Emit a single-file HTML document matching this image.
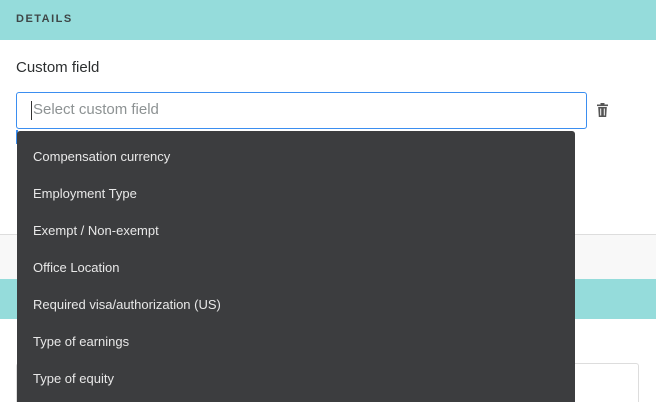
<!DOCTYPE html>
<html><head><style>
html,body{margin:0;width:656px;height:402px;overflow:hidden}
body{background:#fff;font-family:"Liberation Sans",sans-serif;position:relative}
.abs{position:absolute}
</style></head><body>
<div class="abs" style="left:0;top:0;width:656px;height:40px;background:#95dcdb"></div>
<div class="abs" style="left:16px;top:13px;font-size:11px;letter-spacing:1.5px;color:#3e4647;font-weight:bold">DETAILS</div>
<div class="abs" style="left:16px;top:59px;font-size:15px;color:#2c2f30">Custom field</div>
<div class="abs" style="left:16px;top:92px;width:569px;height:35px;border:1px solid #3b8ef0;border-radius:3px"></div>
<div class="abs" style="left:31px;top:101px;width:1px;height:19px;background:#333"></div>
<div class="abs" style="left:33px;top:101px;font-size:15px;color:#8d9293">Select custom field</div>
<svg class="abs" style="left:597px;top:103px" width="11" height="14" viewBox="0 0 11 14"><rect x="0" y="1.5" width="11" height="1.6" fill="#555"/><rect x="3.5" y="0" width="4" height="2" fill="#555"/><path d="M1.2 4h8.6l-.6 10H1.8z" fill="#555"/><rect x="3.2" y="5.5" width="1" height="7" fill="#fff"/><rect x="6.8" y="5.5" width="1" height="7" fill="#fff"/></svg>
<div class="abs" style="left:16px;top:130px;width:2px;height:14px;background:#3b8ef0"></div>
<div class="abs" style="left:0;top:234px;width:656px;height:1px;background:#ddd"></div>
<div class="abs" style="left:0;top:235px;width:656px;height:44px;background:#f8f8f8"></div>
<div class="abs" style="left:0;top:279px;width:656px;height:40px;background:#95dcdb"></div>
<div class="abs" style="left:16px;top:363px;width:623px;height:39px;border:1px solid #ddd;border-bottom:none;border-radius:3px 3px 0 0;box-sizing:border-box"></div>
<div class="abs" style="left:17px;top:131px;width:558px;height:271px;background:#3c3d3f;border-radius:3px 3px 0 0;color:#e8e8e8;font-size:13px;overflow:hidden">
<div class="abs" style="left:16px;top:18px">Compensation currency</div>
<div class="abs" style="left:16px;top:55px">Employment Type</div>
<div class="abs" style="left:16px;top:92px">Exempt / Non-exempt</div>
<div class="abs" style="left:16px;top:129px">Office Location</div>
<div class="abs" style="left:16px;top:166px">Required visa/authorization (US)</div>
<div class="abs" style="left:16px;top:203px">Type of earnings</div>
<div class="abs" style="left:16px;top:240px">Type of equity</div>
</div>
</body></html>
